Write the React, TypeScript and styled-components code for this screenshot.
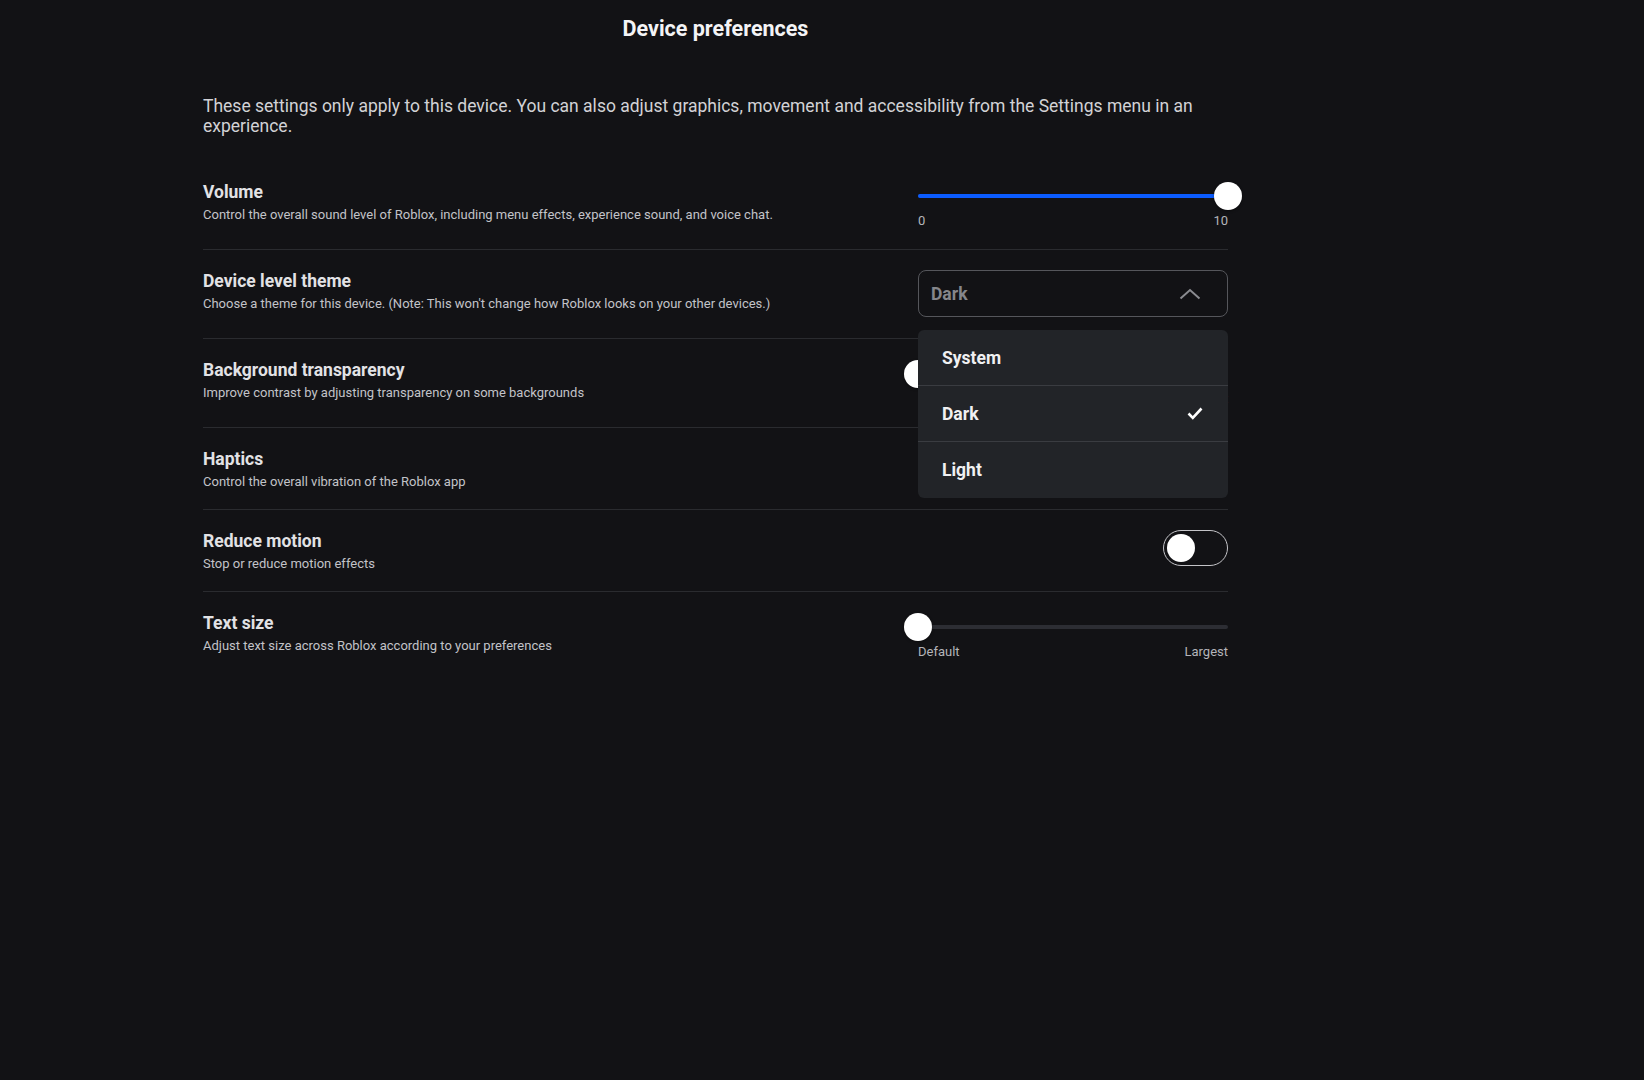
import React from 'react';
import styled, { createGlobalStyle } from 'styled-components';

const GlobalStyle = createGlobalStyle`
  body {
    margin: 0;
    background: #121215;
    font-family: Roboto, "Liberation Sans", sans-serif;
    -webkit-font-smoothing: antialiased;
  }
`;

const Page = styled.div`
  min-height: 100vh;
  background: #121215;
  padding-left: 203px;
`;

const Column = styled.div`
  width: 1025px;
`;

const Header = styled.header`
  height: 56px;
  display: flex;
  align-items: center;
  justify-content: center;
`;

const Title = styled.h1`
  margin: 0;
  font-size: 21.5px;
  font-weight: 700;
  color: #f4f4f6;
`;

const Intro = styled.p`
  margin: 40px 0 25px;
  font-size: 17.5px;
  line-height: 20px;
  color: #d2d2d6;
`;

const Row = styled.div<{ first?: boolean }>`
  display: flex;
  justify-content: space-between;
  align-items: flex-start;
  padding: 21px 0 19px;
  border-top: ${p => (p.first ? 'none' : '1px solid #2a2b2f')};
`;

const Text = styled.div`
  display: flex;
  flex-direction: column;
  gap: 5px;
`;

const Label = styled.div`
  font-size: 17.5px;
  line-height: 20px;
  font-weight: 700;
  color: #e2e2e5;
`;

const Desc = styled.div`
  font-size: 13px;
  line-height: 16px;
  color: #c2c3c8;
`;

const Control = styled.div<{ compact?: boolean }>`
  width: 310px;
  min-height: ${p => (p.compact ? '0' : '48px')};
  position: relative;
  display: flex;
  flex-direction: column;
`;

// slider

const TrackArea = styled.div`
  height: 28px;
  display: flex;
  align-items: center;
`;

const Track = styled.div`
  position: relative;
  width: 100%;
  height: 4px;
  border-radius: 2px;
  background: #2c2d33;
`;

const Fill = styled.div`
  height: 100%;
  border-radius: 2px;
  background: #0b5cff;
`;

const Knob = styled.div`
  position: absolute;
  top: 50%;
  width: 28px;
  height: 28px;
  margin: -14px 0 0 -14px;
  border-radius: 50%;
  background: #ffffff;
  box-shadow: 0 1px 3px rgba(0, 0, 0, 0.4);
`;

const Ticks = styled.div`
  margin-top: 3px;
  display: flex;
  justify-content: space-between;
  font-size: 13px;
  line-height: 16px;
  color: #b4b5ba;
`;

// toggle

const Switch = styled.div<{ on?: boolean }>`
  align-self: flex-end;
  box-sizing: border-box;
  width: 65px;
  height: 36px;
  margin-top: -1px;
  border-radius: 18px;
  padding: 3px;
  display: flex;
  justify-content: ${p => (p.on ? 'flex-end' : 'flex-start')};
  background: ${p => (p.on ? '#0b5cff' : 'transparent')};
  border: 1.2px solid ${p => (p.on ? '#0b5cff' : '#c4c4c8')};
`;

const SwitchKnob = styled.div`
  width: 28px;
  height: 28px;
  border-radius: 50%;
  background: #ffffff;
`;

// select

const SelectBox = styled.div`
  box-sizing: border-box;
  height: 47px;
  margin-top: -1px;
  border: 1px solid #55565b;
  border-radius: 8px;
  padding: 0 26px 0 12px;
  display: flex;
  align-items: center;
  justify-content: space-between;
  font-size: 17.5px;
  font-weight: 700;
  color: #85868b;
`;

const Menu = styled.div`
  position: absolute;
  top: 59px;
  left: 0;
  right: 0;
  z-index: 10;
  background: #222428;
  border-radius: 6px;
  overflow: hidden;
`;

const MenuItem = styled.div<{ last?: boolean }>`
  box-sizing: border-box;
  height: 56px;
  padding: 0 25px 0 24px;
  display: flex;
  align-items: center;
  justify-content: space-between;
  font-size: 17.5px;
  font-weight: 700;
  color: #f0f0f2;
  border-bottom: ${p => (p.last ? 'none' : '1px solid #3a3c41')};
`;

type SliderProps = { value: number; max: number; min: string; maxLabel: string };

const Slider: React.FC<SliderProps> = ({ value, max, min, maxLabel }) => {
  const pct = (value / max) * 100;
  return (
    <Control>
      <TrackArea>
        <Track>
          <Fill style={{ width: `${pct}%` }} />
          <Knob style={{ left: `${pct}%` }} />
        </Track>
      </TrackArea>
      <Ticks>
        <span>{min}</span>
        <span>{maxLabel}</span>
      </Ticks>
    </Control>
  );
};

const Toggle: React.FC<{ on?: boolean }> = ({ on }) => (
  <Control compact>
    <Switch on={on}>
      <SwitchKnob />
    </Switch>
  </Control>
);

const ThemeSelect = () => (
  <Control>
    <SelectBox>
      <span>Dark</span>
      <svg width="22" height="12" viewBox="0 0 22 12" fill="none">
        <polyline points="1.5,10.5 11,2 20.5,10.5" stroke="#8a8b90" strokeWidth="2" />
      </svg>
    </SelectBox>
    <Menu>
      <MenuItem>System</MenuItem>
      <MenuItem>
        <span>Dark</span>
        <svg width="16" height="13" viewBox="0 0 16 13" fill="none">
          <polyline points="1.5,6.5 5.8,10.8 14.5,1.5" stroke="#ffffff" strokeWidth="2.6" />
        </svg>
      </MenuItem>
      <MenuItem last>Light</MenuItem>
    </Menu>
  </Control>
);

const Setting: React.FC<{ label: string; desc: string; first?: boolean; children: React.ReactNode }> = ({
  label,
  desc,
  first,
  children,
}) => (
  <Row first={first}>
    <Text>
      <Label>{label}</Label>
      <Desc>{desc}</Desc>
    </Text>
    {children}
  </Row>
);

export default function App() {
  return (
    <Page>
      <GlobalStyle />
      <Column>
        <Header>
          <Title>Device preferences</Title>
        </Header>
        <Intro>
          These settings only apply to this device. You can also adjust graphics, movement and accessibility
          from the Settings menu in an experience.
        </Intro>
        <Setting
          first
          label="Volume"
          desc="Control the overall sound level of Roblox, including menu effects, experience sound, and voice chat."
        >
          <Slider value={10} max={10} min="0" maxLabel="10" />
        </Setting>
        <Setting
          label="Device level theme"
          desc="Choose a theme for this device. (Note: This won't change how Roblox looks on your other devices.)"
        >
          <ThemeSelect />
        </Setting>
        <Setting label="Background transparency" desc="Improve contrast by adjusting transparency on some backgrounds">
          <Slider value={0} max={10} min="Opaque" maxLabel="Transparent" />
        </Setting>
        <Setting label="Haptics" desc="Control the overall vibration of the Roblox app">
          <Toggle on />
        </Setting>
        <Setting label="Reduce motion" desc="Stop or reduce motion effects">
          <Toggle />
        </Setting>
        <Setting label="Text size" desc="Adjust text size across Roblox according to your preferences">
          <Slider value={0} max={4} min="Default" maxLabel="Largest" />
        </Setting>
      </Column>
    </Page>
  );
}
